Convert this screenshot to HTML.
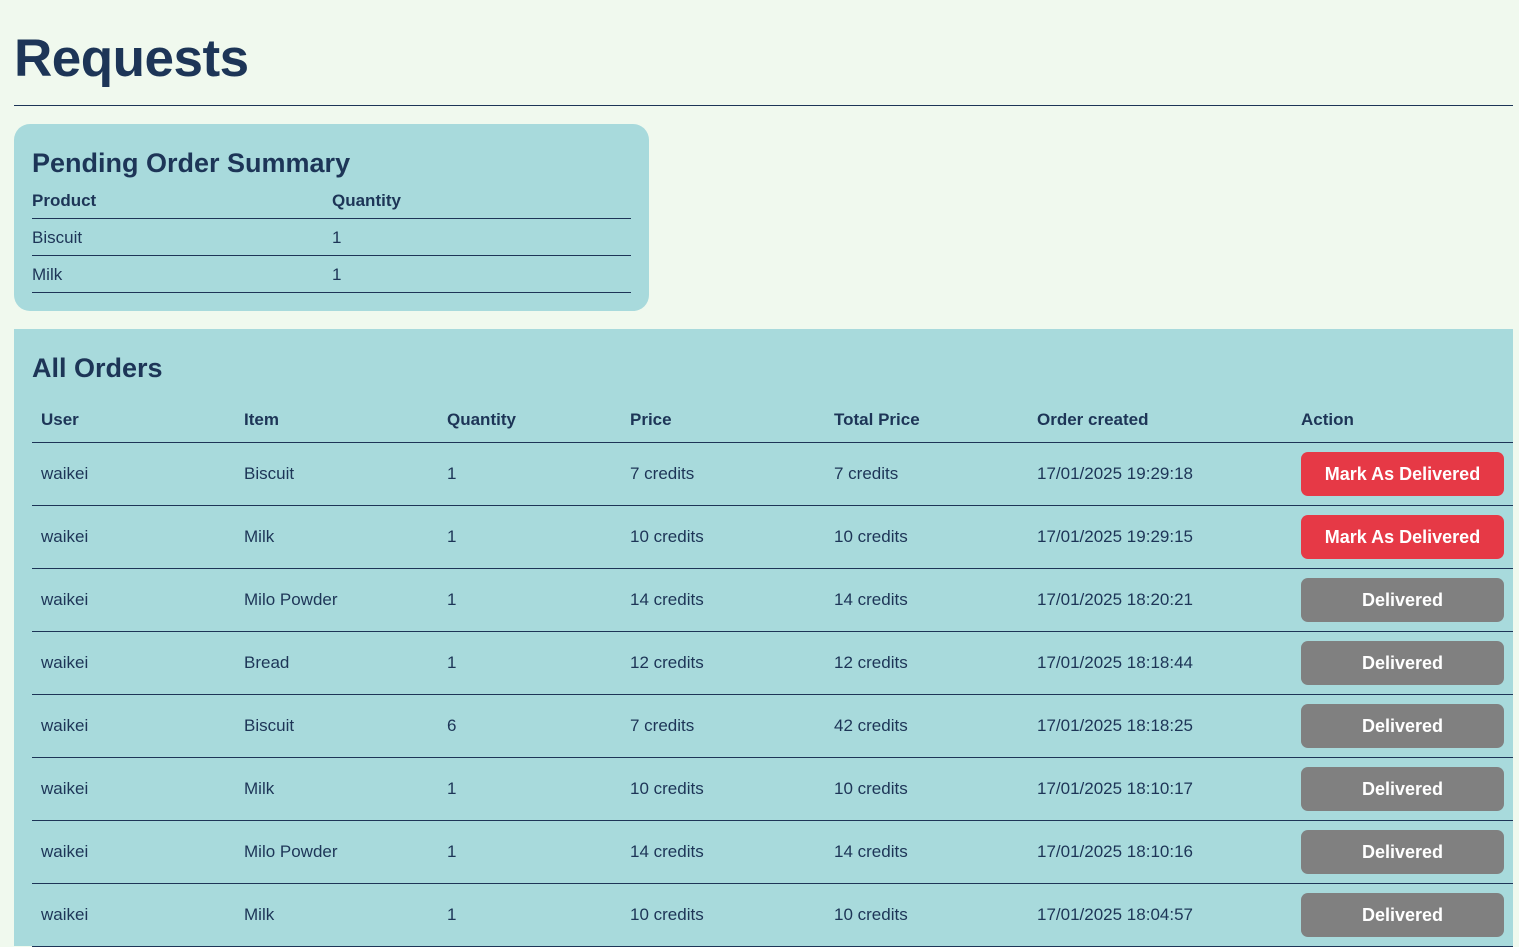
<!DOCTYPE html>
<html><head><meta charset="utf-8"><style>
*{margin:0;padding:0;box-sizing:border-box}
body{width:1519px;height:946px;overflow:hidden;background:#f0f9ee;font-family:"Liberation Sans",sans-serif;color:#1d3557;position:relative}
h1{position:absolute;left:14px;top:28px;font-size:53px;font-weight:bold;letter-spacing:-0.5px}
.hr{position:absolute;left:14px;top:105px;width:1499px;height:1px;background:#1d3557}
.card{position:absolute;left:14px;top:124px;width:635px;height:187px;background:#a8dadc;border-radius:16px}
.card h2{position:absolute;left:18px;top:24px;font-size:27px}
.t{position:absolute;left:18px;width:599px;height:37px;border-bottom:1px solid #1d3557;font-size:17px}
.t span{position:absolute;top:9px}
.all{position:absolute;left:14px;top:329px;width:1499px;height:617px;background:#a8dadc}
.all h2{position:absolute;left:18px;top:24px;font-size:27px}
.row{position:absolute;left:18px;width:1481px;height:63px;border-bottom:1px solid #1d3557;font-size:17px}
.row span{position:absolute;top:21px}
.hd span{font-weight:bold;top:31px}
.btn{position:absolute;left:1269px;top:9px;width:203px;height:44px;border-radius:7px;color:#fff;font-weight:bold;font-size:18px;text-align:center;line-height:44px}
.r{background:#e63946}.g{background:#808080}
</style></head><body>
<h1>Requests</h1><div class="hr"></div>
<div class="card"><h2>Pending Order Summary</h2>
<div class="t" style="top:58px;height:37px;font-weight:bold"><span style="left:0;top:9px">Product</span><span style="left:300px;top:9px">Quantity</span></div>
<div class="t" style="top:95px"><span style="left:0">Biscuit</span><span style="left:300px">1</span></div>
<div class="t" style="top:132px"><span style="left:0">Milk</span><span style="left:300px">1</span></div>
</div>
<div class="all"><h2>All Orders</h2>
<div class="row hd" style="top:50px;height:64px"><span style="left:9px">User</span><span style="left:212px">Item</span><span style="left:415px">Quantity</span><span style="left:598px">Price</span><span style="left:802px">Total Price</span><span style="left:1005px">Order created</span><span style="left:1269px">Action</span></div>
<div class="row" style="top:114px"><span style="left:9px">waikei</span><span style="left:212px">Biscuit</span><span style="left:415px">1</span><span style="left:598px">7 credits</span><span style="left:802px">7 credits</span><span style="left:1005px">17/01/2025 19:29:18</span><div class="btn r">Mark As Delivered</div></div>
<div class="row" style="top:177px"><span style="left:9px">waikei</span><span style="left:212px">Milk</span><span style="left:415px">1</span><span style="left:598px">10 credits</span><span style="left:802px">10 credits</span><span style="left:1005px">17/01/2025 19:29:15</span><div class="btn r">Mark As Delivered</div></div>
<div class="row" style="top:240px"><span style="left:9px">waikei</span><span style="left:212px">Milo Powder</span><span style="left:415px">1</span><span style="left:598px">14 credits</span><span style="left:802px">14 credits</span><span style="left:1005px">17/01/2025 18:20:21</span><div class="btn g">Delivered</div></div>
<div class="row" style="top:303px"><span style="left:9px">waikei</span><span style="left:212px">Bread</span><span style="left:415px">1</span><span style="left:598px">12 credits</span><span style="left:802px">12 credits</span><span style="left:1005px">17/01/2025 18:18:44</span><div class="btn g">Delivered</div></div>
<div class="row" style="top:366px"><span style="left:9px">waikei</span><span style="left:212px">Biscuit</span><span style="left:415px">6</span><span style="left:598px">7 credits</span><span style="left:802px">42 credits</span><span style="left:1005px">17/01/2025 18:18:25</span><div class="btn g">Delivered</div></div>
<div class="row" style="top:429px"><span style="left:9px">waikei</span><span style="left:212px">Milk</span><span style="left:415px">1</span><span style="left:598px">10 credits</span><span style="left:802px">10 credits</span><span style="left:1005px">17/01/2025 18:10:17</span><div class="btn g">Delivered</div></div>
<div class="row" style="top:492px"><span style="left:9px">waikei</span><span style="left:212px">Milo Powder</span><span style="left:415px">1</span><span style="left:598px">14 credits</span><span style="left:802px">14 credits</span><span style="left:1005px">17/01/2025 18:10:16</span><div class="btn g">Delivered</div></div>
<div class="row" style="top:555px"><span style="left:9px">waikei</span><span style="left:212px">Milk</span><span style="left:415px">1</span><span style="left:598px">10 credits</span><span style="left:802px">10 credits</span><span style="left:1005px">17/01/2025 18:04:57</span><div class="btn g">Delivered</div></div>
</div>
</body></html>
